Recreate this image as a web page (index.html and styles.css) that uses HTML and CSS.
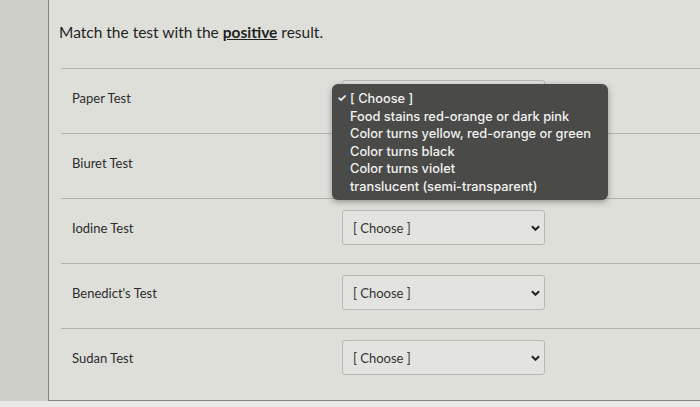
FILE: index.html
```html
<!DOCTYPE html>
<html lang="en">
<head>
  <meta charset="UTF-8" />
  <meta name="viewport" content="width=device-width, initial-scale=1.0" />
  <title>Matching Question</title>
  <link rel="stylesheet" href="styles.css">
</head>
<body>
  <div class="card">
    <p class="question">Match the test with the <u><b>positive</b></u> result.</p>

    <div class="answers">
      <div class="row">
        <span class="label">Paper Test</span>
        <div class="select covered"><span>[ Choose ]</span><svg class="chev" viewBox="0 0 10 6"><path d="M1 1l4 4 4-4" /></svg></div>
      </div>
      <div class="row">
        <span class="label">Biuret Test</span>
        <div class="select covered"><span>[ Choose ]</span><svg class="chev" viewBox="0 0 10 6"><path d="M1 1l4 4 4-4" /></svg></div>
      </div>
      <div class="row">
        <span class="label">Iodine Test</span>
        <div class="select"><span>[ Choose ]</span><svg class="chev" viewBox="0 0 10 6"><path d="M1 1l4 4 4-4" /></svg></div>
      </div>
      <div class="row">
        <span class="label">Benedict's Test</span>
        <div class="select"><span>[ Choose ]</span><svg class="chev" viewBox="0 0 10 6"><path d="M1 1l4 4 4-4" /></svg></div>
      </div>
      <div class="row">
        <span class="label">Sudan Test</span>
        <div class="select"><span>[ Choose ]</span><svg class="chev" viewBox="0 0 10 6"><path d="M1 1l4 4 4-4" /></svg></div>
      </div>
    </div>
  </div>
  <div class="bottom-strip"></div>

  <!-- open menu of the first select -->
  <ul class="menu">
    <li class="checked">[ Choose ]</li>
    <li>Food stains red-orange or dark pink</li>
    <li>Color turns yellow, red-orange or green</li>
    <li>Color turns black</li>
    <li>Color turns violet</li>
    <li>translucent (semi-transparent)</li>
  </ul>
</body>
</html>
```

FILE: styles.css
```css
body {
  margin: 0;
  background-color: #cfcfc9;
  font-family: Lato, "Open Sans", sans-serif;
  color: #2a2a2a;
  overflow: hidden;
}

.card {
  margin-left: 48px;
  padding-bottom: 7px;
  background-color: #dfdfda;
  border-left: 1px solid #85857f;
  border-bottom: 1px solid #85857f;
}

.question {
  margin: 0;
  padding: 22px 0 0 10px;
  font-size: 15.5px;
  line-height: 20px;
  color: #1f1f1f;
}

.question b {
  font-weight: 700;
}

.answers {
  margin-top: 26px;
}

.row {
  display: flex;
  align-items: center;
  margin-left: 12px;
  padding: 11px 0 18px 11px;
  border-top: 1px solid #b3b3ae;
}

.label {
  width: 270px;
  font-size: 13px;
  color: #2c2c2c;
}

.select {
  display: flex;
  align-items: center;
  justify-content: space-between;
  box-sizing: border-box;
  width: 203px;
  height: 35px;
  padding: 0 4px 0 10px;
  background-color: #e3e3df;
  border: 1px solid #b9b9b4;
  border-radius: 3px;
  font-size: 13px;
  color: #333;
}

/* hidden behind the open menu */
.select.covered span,
.select.covered .chev {
  visibility: hidden;
}

.chev {
  width: 9px;
  height: 6px;
  fill: none;
  stroke: #222;
  stroke-width: 2.2;
}

.bottom-strip {
  height: 8px;
  background-color: #e9e9e7;
}

.menu {
  position: absolute;
  left: 332px;
  top: 84px;
  width: 276px;
  margin: 0;
  padding: 6px 0 4px 0;
  list-style: none;
  background-color: #4a4a48;
  border-radius: 6px;
  box-shadow: 0 2px 6px rgba(0, 0, 0, 0.35);
  font-family: Inter, Roboto, sans-serif;
  font-size: 12.8px;
  font-weight: 500;
  line-height: 17.6px;
  color: #f2f2f0;
}

.menu li {
  position: relative;
  padding-left: 18px;
}

.menu li.checked::before {
  content: "\2713";
  position: absolute;
  left: 5px;
  font-size: 11px;
  font-weight: 700;
}
```
